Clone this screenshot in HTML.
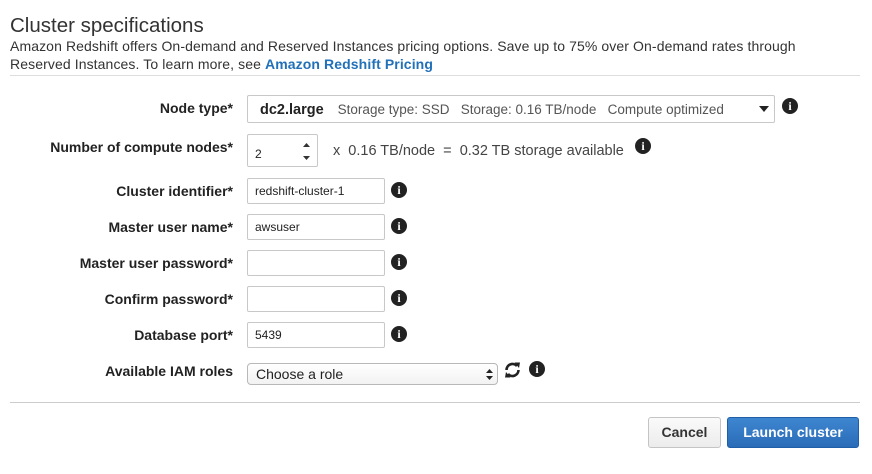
<!DOCTYPE html>
<html><head><style>
body{margin:0;width:872px;height:474px;background:#fff;font-family:"Liberation Sans",sans-serif;color:#333;position:relative;overflow:hidden}
.a{position:absolute}
.lbl{position:absolute;right:639px;font-weight:bold;font-size:14px;color:#222;white-space:nowrap}
.inp{position:absolute;left:247px;width:138px;height:24px;border:1px solid #c8c8c8;border-radius:2px;box-sizing:border-box;font-size:12px;padding:5px 7px;color:#222}
.info{position:absolute;width:16px;height:16px;border-radius:50%;background:#222;color:#fff;font:bold 12px "Liberation Serif",serif;text-align:center;line-height:16px}
</style></head><body>
<div class="a" style="left:10px;top:14px;font-size:20.5px;color:#333">Cluster specifications</div>
<div class="a" style="left:10px;top:37px;font-size:14px;line-height:18px;color:#333;width:860px;letter-spacing:0.1px">Amazon Redshift offers On-demand and Reserved Instances pricing options. Save up to 75% over On-demand rates through<br>Reserved Instances. To learn more, see <b style="color:#2170b8">Amazon Redshift Pricing</b></div>
<div class="a" style="left:10px;top:75px;width:850px;height:1px;background:#ddd"></div>

<div class="lbl" style="top:100px">Node type*</div>
<div class="a" style="left:247px;top:95px;width:528px;height:28px;border:1px solid #c8c8c8;border-radius:2px;box-sizing:border-box;font-size:13.5px;color:#555;padding:6px 0 0 12px;white-space:nowrap"><b style="color:#222;font-size:14.5px;margin-right:14px">dc2.large</b>Storage type: SSD&nbsp;&nbsp;&nbsp;Storage: 0.16 TB/node&nbsp;&nbsp;&nbsp;Compute optimized
<svg class="a" style="left:511px;top:10px" width="10" height="7"><path d="M0 0h10L5 6z" fill="#222"/></svg></div>
<div class="info" style="left:782px;top:98px">i</div>

<div class="lbl" style="top:139px">Number of compute nodes*</div>
<div class="a" style="left:247px;top:134px;width:71px;height:33px;border:1px solid #c8c8c8;border-radius:2px;box-sizing:border-box;font-size:12px;padding:12px 0 0 7px;color:#222">2
<svg class="a" style="left:54px;top:7px" width="9" height="20"><path d="M1 5L4.5 1L8 5z M1 14L4.5 18L8 14z" fill="#333"/></svg></div>
<div class="a" style="left:333px;top:143px;font-size:14.5px;color:#444;white-space:pre">x  0.16 TB/node  =  0.32 TB storage available</div>
<div class="info" style="left:635px;top:138px">i</div>

<div class="lbl" style="top:183px">Cluster identifier*</div>
<div class="inp" style="top:178px;height:26px">redshift-cluster-1</div>
<div class="info" style="left:391px;top:182px">i</div>

<div class="lbl" style="top:219px">Master user name*</div>
<div class="inp" style="top:214px;height:26px">awsuser</div>
<div class="info" style="left:391px;top:218px">i</div>

<div class="lbl" style="top:255px">Master user password*</div>
<div class="inp" style="top:250px;height:26px"></div>
<div class="info" style="left:391px;top:254px">i</div>

<div class="lbl" style="top:291px">Confirm password*</div>
<div class="inp" style="top:286px;height:26px"></div>
<div class="info" style="left:391px;top:290px">i</div>

<div class="lbl" style="top:327px">Database port*</div>
<div class="inp" style="top:322px;height:26px">5439</div>
<div class="info" style="left:391px;top:326px">i</div>

<div class="lbl" style="top:363px;font-size:14px">Available IAM roles</div>
<div class="a" style="left:247px;top:363px;width:251px;height:22px;border:1px solid #b8b8b8;border-radius:4px;box-sizing:border-box;font-size:14px;padding:2px 8px;color:#222;background:linear-gradient(#fff,#f2f2f2)">Choose a role
<svg class="a" style="left:238px;top:5px" width="7" height="11"><path d="M0 4L3.5 0L7 4z M0 7L3.5 11L7 7z" fill="#222"/></svg></div>
<svg class="a" style="left:503px;top:361px" width="19" height="18" viewBox="0 0 19 18"><path d="M3.5 9a6 6 0 0 1 10.5-4" stroke="#222" stroke-width="2.6" fill="none"/><path d="M11.5 1.5l5.5 0-1 5.5z" fill="#222"/><path d="M15.5 9a6 6 0 0 1-10.5 4" stroke="#222" stroke-width="2.6" fill="none"/><path d="M7.5 16.5l-5.5 0 1-5.5z" fill="#222"/></svg>
<div class="info" style="left:529px;top:361px">i</div>

<div class="a" style="left:10px;top:402px;width:850px;height:1px;background:#ccc"></div>
<div class="a" style="left:648px;top:417px;width:73px;height:31px;border:1px solid #c4c4c4;border-radius:3px;box-sizing:border-box;background:linear-gradient(#fafafa,#ececec);font-weight:bold;font-size:14px;text-align:center;line-height:29px;color:#333">Cancel</div>
<div class="a" style="left:727px;top:417px;width:132px;height:31px;border:1px solid #1e5fa8;border-radius:3px;box-sizing:border-box;background:linear-gradient(#3e86d0,#2a6cb8);font-weight:bold;font-size:14px;text-align:center;line-height:29px;color:#fff">Launch cluster</div>
</body></html>
